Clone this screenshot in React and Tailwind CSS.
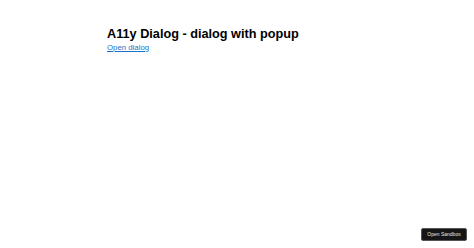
export default function App() {
  return (
    <div className="relative w-[474px] h-[248px] bg-white" style={{ fontFamily: '"Liberation Sans", Arial, sans-serif' }}>
      <div className="pl-[107px] pt-[26px]">
        <h1 className="text-[12.7px] leading-[16px] font-bold text-black">A11y Dialog - dialog with popup</h1>
        <a href="#" className="block mt-[1px] text-[7.8px] leading-[10px] text-[#1a73c8] underline w-fit">Open dialog</a>
      </div>
      <button className="absolute right-[7px] bottom-[7px] w-[46px] h-[13px] bg-[#151515] border border-[#555] rounded-[2px] text-[#e8e8e8] text-[5px] leading-none flex items-center justify-center">
        Open Sandbox
      </button>
    </div>
  );
}
